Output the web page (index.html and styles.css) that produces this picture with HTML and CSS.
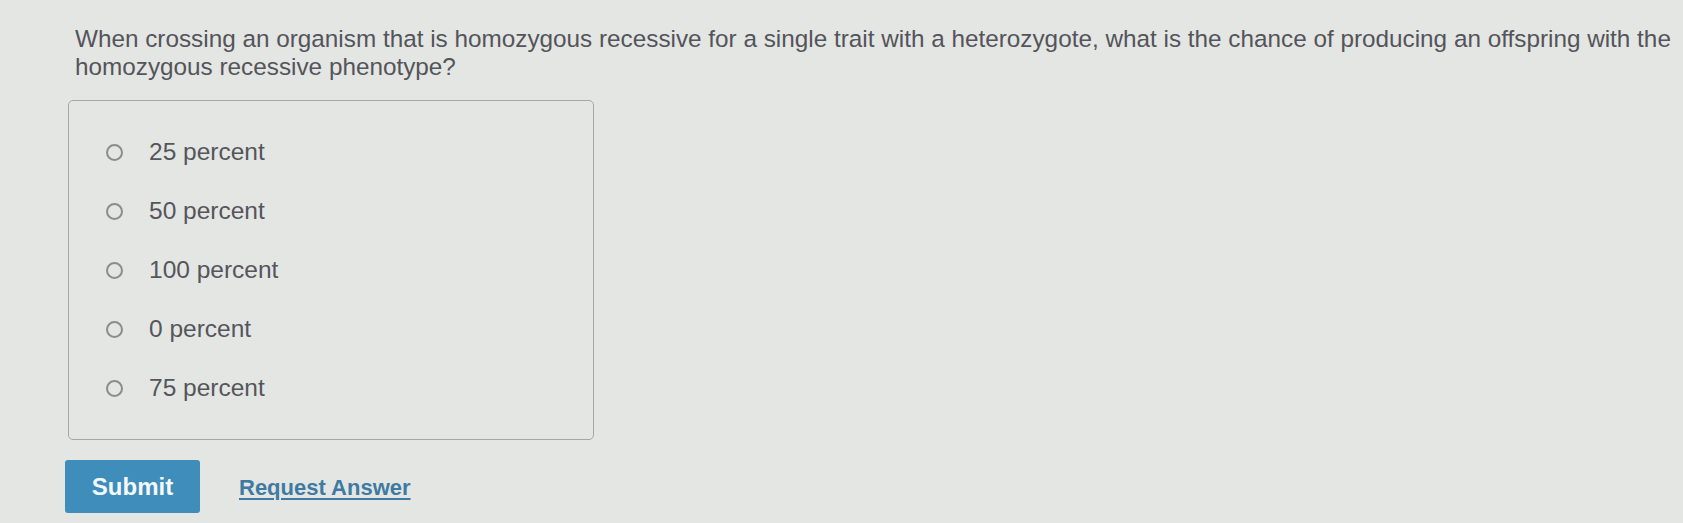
FILE: index.html
```html
<!DOCTYPE html>
<html>
<head>
<meta charset="utf-8">
<link rel="stylesheet" href="styles.css">
</head>
<body>
<div class="page">
  <p class="question">When crossing an organism that is homozygous recessive for a single trait with a heterozygote, what is the chance of producing an offspring with the homozygous recessive phenotype?</p>
  <div class="choices">
    <label class="choice"><span class="radio"></span><span class="label">25 percent</span></label>
    <label class="choice"><span class="radio"></span><span class="label">50 percent</span></label>
    <label class="choice"><span class="radio"></span><span class="label">100 percent</span></label>
    <label class="choice"><span class="radio"></span><span class="label">0 percent</span></label>
    <label class="choice"><span class="radio"></span><span class="label">75 percent</span></label>
  </div>
  <div class="actions">
    <button class="submit">Submit</button>
    <a class="request" href="#">Request Answer</a>
  </div>
</div>
</body>
</html>
```

FILE: styles.css
```css
html, body {
  margin: 0;
  padding: 0;
  background: #e4e6e3;
}
body {
  width: 1683px;
  height: 523px;
  overflow: hidden;
  font-family: "Liberation Sans", Arial, sans-serif;
}
.page {
  padding: 25px 0 0 68px;
}
.question {
  margin: 0 0 0 7px;
  width: 1605px;
  font-size: 24.3px;
  line-height: 28px;
  color: #54545b;
}
.choices {
  margin-top: 19px;
  width: 526px;
  height: 340px;
  box-sizing: border-box;
  border: 1px solid #a6a8a7;
  border-radius: 5px;
  padding: 39px 0 0 37px;
  display: flex;
  flex-direction: column;
  gap: 35px;
}
.choice {
  display: flex;
  align-items: center;
  gap: 26px;
  height: 24px;
}
.radio {
  width: 17px;
  height: 17px;
  box-sizing: border-box;
  border: 2px solid #8c8c8f;
  border-radius: 50%;
  flex: none;
}
.label {
  font-size: 24.5px;
  line-height: 24px;
  color: #55555c;
}
.actions {
  margin-top: 20px;
  margin-left: -3px;
  display: flex;
  align-items: center;
  gap: 39px;
}
.submit {
  width: 135px;
  height: 53px;
  border: none;
  border-radius: 3px;
  background: #3e8dbb;
  color: #f4f8fa;
  font-family: "Liberation Sans", Arial, sans-serif;
  font-weight: bold;
  font-size: 24px;
  padding: 0;
}
.request {
  color: #3f7aa2;
  font-size: 22px;
  font-weight: bold;
  text-decoration: underline;
  text-underline-offset: 3px;
  margin-top: 2px;
}
```
